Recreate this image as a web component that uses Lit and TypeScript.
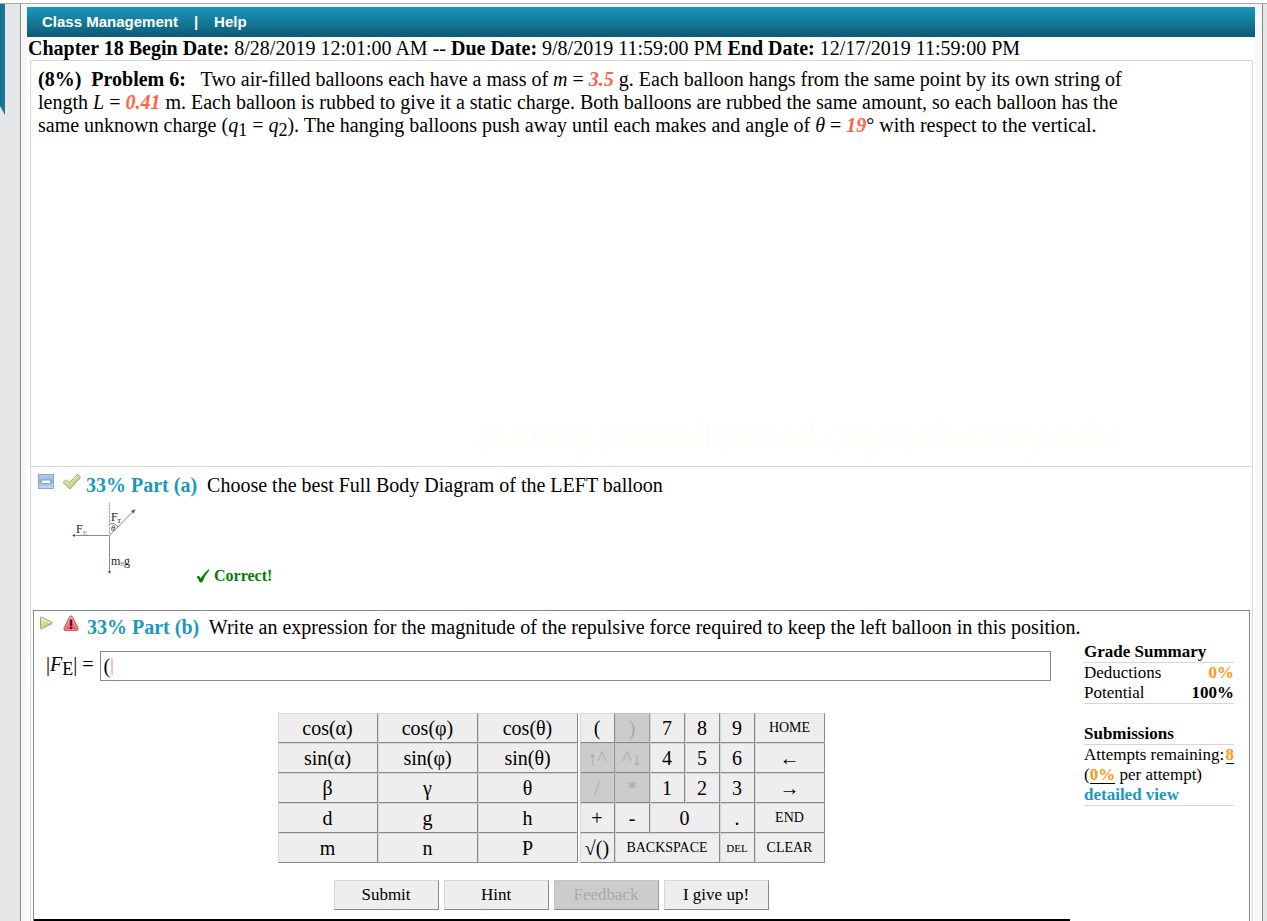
import { LitElement, html, css, svg, nothing } from "lit";
import { customElement, property, state } from "lit/decorators.js";

interface Key {
  label: string;
  off?: boolean;
  span?: number;
  size?: "small" | "tiny";
}

const SYMBOLS: string[] = [
  "cos(α)", "cos(φ)", "cos(θ)",
  "sin(α)", "sin(φ)", "sin(θ)",
  "β", "γ", "θ",
  "d", "g", "h",
  "m", "n", "P",
];

const KEYS: Key[] = [
  { label: "(" }, { label: ")", off: true }, { label: "7" }, { label: "8" }, { label: "9" }, { label: "HOME", size: "small" },
  { label: "↑^", off: true }, { label: "^↓", off: true }, { label: "4" }, { label: "5" }, { label: "6" }, { label: "←" },
  { label: "/", off: true }, { label: "*", off: true }, { label: "1" }, { label: "2" }, { label: "3" }, { label: "→" },
  { label: "+" }, { label: "-" }, { label: "0", span: 2 }, { label: "." }, { label: "END", size: "small" },
  { label: "√()" }, { label: "BACKSPACE", span: 3, size: "small" }, { label: "DEL", size: "tiny" }, { label: "CLEAR", size: "small" },
];

const buttonStyles = css`
  button {
    box-sizing: border-box;
    height: 30px;
    margin: 0;
    padding: 0;
    font-family: "Liberation Serif", "Times New Roman", serif;
    font-size: 20px;
    line-height: 28px;
    color: #000;
    background: #eee;
    border: 1px solid;
    border-color: #d6d6d6 #888 #888 #d6d6d6;
    border-radius: 0;
    white-space: nowrap;
  }
  button:disabled {
    color: #aaa;
    background: #ccc;
    border-color: #c4c4c4 #999 #888 #c4c4c4;
  }
`;

@customElement("key-pad")
export class KeyPad extends LitElement {
  static styles = [
    buttonStyles,
    css`
      :host {
        display: flex;
        justify-content: center;
        gap: 2px;
      }
      .symbols {
        display: grid;
        grid-template-columns: repeat(3, 100px);
      }
      .keys {
        display: grid;
        grid-template-columns: repeat(5, 35px) 70px;
      }
      .two {
        grid-column: span 2;
      }
      .three {
        grid-column: span 3;
      }
      .small {
        font-size: 14px;
      }
      .tiny {
        font-size: 11px;
      }
    `,
  ];

  private press(label: string) {
    this.dispatchEvent(new CustomEvent("key-press", { detail: label }));
  }

  render() {
    return html`
      <div class="symbols">
        ${SYMBOLS.map((s) => html`<button type="button" @click=${() => this.press(s)}>${s}</button>`)}
      </div>
      <div class="keys">
        ${KEYS.map((k) => {
          const names = [k.size ?? "", k.span === 2 ? "two" : k.span === 3 ? "three" : ""].join(" ").trim();
          return html`<button
            type="button"
            class=${names || nothing}
            ?disabled=${!!k.off}
            @click=${() => this.press(k.label)}
          >${k.label}</button>`;
        })}
      </div>
    `;
  }
}

@customElement("status-icon")
export class StatusIcon extends LitElement {
  @property() name = "";

  static styles = css`
    :host {
      display: block;
      width: 20px;
      height: 18px;
    }
    svg {
      display: block;
    }
  `;

  private art() {
    switch (this.name) {
      case "collapse":
        return svg`
          <defs><linearGradient id="b" x1="0" y1="0" x2="0" y2="1">
            <stop offset="0" stop-color="#b9d0ea"/><stop offset="0.5" stop-color="#8fb2dc"/><stop offset="1" stop-color="#c3dcf2"/>
          </linearGradient></defs>
          <rect x="0.5" y="1.5" width="15" height="14" fill="url(#b)" stroke="#8ba9cf"/>
          <rect x="3.5" y="7" width="9" height="3.500" rx="1" fill="#fff" stroke="#7b9dcc"/>`;
      case "check":
        return svg`
          <defs><linearGradient id="g" x1="0" y1="0" x2="1" y2="1">
            <stop offset="0" stop-color="#d3e6a0"/><stop offset="1" stop-color="#b4d573"/>
          </linearGradient></defs>
          <path d="M1 9.5 L4.2 6.8 L7.4 9.6 L15.4 1.4 L18.6 4.2 L8 16 Z" fill="url(#g)" stroke="#93ac6c" stroke-linejoin="round"/>
          <path d="M2.6 9.6 L4.3 8.2 L7.5 11.1 L15.4 3" fill="none" stroke="#e6f1c6" stroke-width="1"/>`;
      case "play":
        return svg`
          <defs><linearGradient id="p" x1="0" y1="0" x2="1" y2="1">
            <stop offset="0" stop-color="#e3efbd"/><stop offset="1" stop-color="#a5c95c"/>
          </linearGradient></defs>
          <path d="M1.5 2.6 Q1.5 1.6 2.5 2 L12.6 7.2 Q13.6 8 12.6 8.7 L2.5 13.8 Q1.5 14.2 1.5 13.2 Z" fill="url(#p)" stroke="#93ac6c"/>
          <path d="M2.7 3.6 L11.2 8" fill="none" stroke="#f3f9de"/>`;
      default:
        return svg`
          <defs><linearGradient id="r" x1="0" y1="0" x2="0" y2="1">
            <stop offset="0" stop-color="#f0a0a0"/><stop offset="1" stop-color="#dd5158"/>
          </linearGradient></defs>
          <path d="M6.6 1.6 Q8 0.2 9.3 1.6 L15 13 Q15.6 15.6 13.4 15.6 L2.6 15.6 Q0.4 15.6 1 13 Z" fill="url(#r)" stroke="#c65a60"/>
          <path d="M7.9 2.6 L2.4 13.4 Q2.2 14.5 3.2 14.5 L12.8 14.5 Q13.8 14.5 13.5 13.4 Z" fill="none" stroke="#f6c3c3" stroke-opacity="0.7" stroke-width="0.8"/>
          <path d="M8 5.500 L8 10" stroke="#6b1018" stroke-width="2.4" stroke-linecap="round"/>
          <circle cx="8" cy="13" r="1.3" fill="#6b1018"/>`;
    }
  }

  render() {
    return html`<svg width="20" height="18" viewBox="0 0 20 18" aria-hidden="true">${this.art()}</svg>`;
  }
}

@customElement("force-diagram")
export class ForceDiagram extends LitElement {
  static styles = css`
    :host {
      display: block;
    }
    svg {
      display: block;
      font-family: "Liberation Serif", "Times New Roman", serif;
      fill: #222;
    }
    .line {
      stroke: #8c8c8c;
      stroke-width: 1;
      fill: none;
    }
    .dash {
      stroke: #aaa;
      stroke-dasharray: 3 1;
    }
    .name {
      font-size: 12px;
    }
    .sub {
      font-size: 7px;
    }
    .light {
      fill: #888;
    }
    .angle {
      font-size: 8px;
      font-style: italic;
    }
    .head {
      fill: #555;
    }
  `;

  render() {
    return html`
      <svg width="68" height="74" viewBox="0 0 68 74" role="img" aria-label="Free body diagram of the left balloon">
        <path class="line dash" d="M37.5 1 V33" />
        <path class="line" d="M1 33.5 H37.5 V70" />
        <path class="line" d="M37.5 33.5 L61 9.5" />
        <path class="line" d="M37.5 22 Q43 20 46 25" />
        <path class="head" d="M0 33.5 l3 -1.500 v3 z M37.5 72 l-1.500 -3 h3 z M63.500 7 l-4.500 2 l2.500 2.500 z" />
        <text class="name" x="4" y="31">F</text>
        <text class="sub light" x="11" y="33">E</text>
        <text class="name" x="39" y="19">F</text>
        <text class="sub" x="45" y="21">T</text>
        <text class="angle" x="39" y="29">θ</text>
        <text class="name" x="39" y="63">m</text>
        <text class="sub light" x="48" y="64">B</text>
        <text class="name" x="52" y="63">g</text>
      </svg>
    `;
  }
}

@customElement("app-root")
export class AppRoot extends LitElement {
  @state() private answer = "(";

  static styles = [
    buttonStyles,
    css`
      :host {
        display: flex;
        flex-direction: column;
        box-sizing: border-box;
        height: 100vh;
        overflow: hidden;
        padding-top: 3px;
        background: #fff;
        color: #000;
        font-family: "Liberation Serif", "Times New Roman", serif;
        font-size: 20px;
        line-height: 23px;
      }
      a {
        color: inherit;
        text-decoration: none;
      }
      .shell {
        flex: 1;
        min-height: 0;
        display: flex;
        border-top: 1px solid #aaa;
        background: #e5e7e9;
      }
      .rail {
        flex: 0 0 20px;
      }
      .ribbon {
        width: 5px;
        height: 111px;
        background: linear-gradient(90deg, #12708f, #1a7c9c);
        clip-path: polygon(0 0, 100% 0, 100% 100%, 0 92%);
      }
      .edge {
        flex: 0 0 4px;
      }
      .panel {
        flex: 1;
        min-width: 0;
        display: flex;
        flex-direction: column;
        padding: 3px 7px 0 6px;
        background: #f7f7f7;
        border: solid #888;
        border-width: 0 1px;
      }
      .menu {
        display: flex;
        align-items: center;
        gap: 16px;
        height: 30px;
        padding-left: 15px;
        background: linear-gradient(#1a98bd, #0d5a75);
        color: #fff;
        font: bold 15px/30px "Liberation Sans", Arial, sans-serif;
      }
      .page {
        flex: 1;
        min-height: 0;
        display: flex;
        flex-direction: column;
        background: #fff;
        padding: 0 2px 0 3px;
      }
      .dates {
        margin: 0 0 0 -2px;
      }
      .sheet {
        flex: 1;
        display: flex;
        flex-direction: column;
        border: solid #d6d6d6;
        border-width: 1px 1px 0;
      }
      .problem {
        display: flex;
        flex-direction: column;
        justify-content: space-between;
        box-sizing: border-box;
        min-height: 406px;
        padding: 7px 120px 8px 7px;
        border-bottom: 1px solid #d6d6d6;
      }
      .problem p {
        margin: 0;
      }
      .problem .stamp {
        align-self: flex-end;
        margin-right: 14px;
        color: #fffef6;
        font: 36px/44px "Open Sans", sans-serif;
      }
      .value {
        color: #ff6347;
        font-weight: bold;
        font-style: italic;
      }
      sub {
        font-size: 18px;
        line-height: 0;
        vertical-align: -4px;
      }
      .title {
        display: flex;
        align-items: flex-start;
        gap: 4px;
        margin: 0;
        font-size: 20px;
        font-weight: normal;
      }
      .title span {
        padding-top: 1px;
      }
      .title strong {
        color: #1a98bd;
        margin-right: 5px;
      }
      .part-a {
        box-sizing: border-box;
        padding: 6px 7px 0;
        height: 143px;
      }
      .result {
        display: flex;
        align-items: flex-end;
        gap: 56px;
        padding: 5px 0 0 34px;
      }
      .correct {
        display: flex;
        align-items: center;
        gap: 4px;
        color: #008000;
        font-size: 16px;
        font-weight: bold;
        line-height: 20px;
        margin-bottom: -10px;
      }
      .part-b {
        flex: 1;
        margin: 0 2px;
        border: solid #888;
        border-width: 1px 1px 0;
      }
      .part-b .title {
        padding: 4px 0 0 5px;
      }
      .columns {
        display: grid;
        grid-template-columns: 1fr 150px;
        column-gap: 14px;
        padding-right: 15px;
      }
      .entry {
        display: flex;
        align-items: flex-start;
        gap: 6px;
        padding: 12px 19px 32px 12px;
      }
      .entry label {
        line-height: 27px;
      }
      .field {
        position: relative;
        flex: 1;
      }
      .field input {
        display: block;
        box-sizing: border-box;
        width: 100%;
        height: 30px;
        padding: 0 3px;
        border: 1px solid #888;
        border-radius: 0;
        background: #fff;
        font: 20px/28px "Liberation Serif", "Times New Roman", serif;
        outline: none;
      }
      .caret {
        position: absolute;
        left: 11px;
        top: 7px;
        width: 2px;
        height: 17px;
        background: #ffb8dc;
      }
      .controls {
        padding-right: 2px;
      }
      .actions {
        display: flex;
        justify-content: center;
        gap: 5px;
        padding: 17px 0 9px;
      }
      .actions button {
        width: 105px;
        font-size: 17px;
      }
      .rule {
        margin: 0;
        border: 0;
        height: 3px;
        background: #000;
      }
      .summary {
        padding-top: 3px;
        font-size: 17px;
        line-height: 20px;
      }
      .summary h3 {
        margin: 0;
        font-size: 17px;
        line-height: 20px;
        border-bottom: 1px solid #d6d6d6;
      }
      .block {
        border-bottom: 1px solid #d6d6d6;
        margin-bottom: 20px;
      }
      .row {
        display: flex;
        justify-content: space-between;
        white-space: nowrap;
      }
      .orange {
        color: #ff9912;
        font-weight: bold;
      }
      .marked {
        display: inline-block;
        line-height: 17px;
        border-bottom: 1px solid #000;
      }
      .detail {
        display: block;
        color: #1a98bd;
        font-weight: bold;
      }
    `,
  ];

  render() {
    return html`
      <div class="shell">
        <div class="rail"><div class="ribbon"></div></div>
        <div class="panel">
          <nav class="menu">
            <a href="#class">Class Management</a><span>|</span><a href="#help">Help</a>
          </nav>
          <main class="page">
            <p class="dates">
              <b>Chapter 18 Begin Date:</b> 8/28/2019 12:01:00 AM -- <b>Due Date:</b> 9/8/2019 11:59:00 PM
              <b>End Date:</b> 12/17/2019 11:59:00 PM
            </p>
            <div class="sheet">
              <section class="problem">
                <p>
                  <b>(8%) &nbsp;Problem 6:</b> &nbsp; Two air-filled balloons each have a mass of <i>m</i> =
                  <span class="value">3.5</span> g. Each balloon hangs from the same point by its own string of length
                  <i>L</i> = <span class="value">0.41</span> m. Each balloon is rubbed to give it a static charge. Both
                  balloons are rubbed the same amount, so each balloon has the same unknown charge
                  (<i>q</i><sub>1</sub> = <i>q</i><sub>2</sub>). The hanging balloons push away until each makes and
                  angle of <i>θ</i> = <span class="value">19</span>° with respect to the vertical.
                </p>
                <p class="stamp">audrey.powell@mail.citytech.cuny.edu</p>
              </section>

              <section class="part-a">
                <h2 class="title">
                  <status-icon name="collapse"></status-icon><status-icon name="check"></status-icon>
                  <span><strong>33% Part (a)</strong> Choose the best Full Body Diagram of the LEFT balloon</span>
                </h2>
                <div class="result">
                  <force-diagram></force-diagram>
                  <span class="correct">
                    <svg width="14" height="14" viewBox="0 0 14 14" aria-hidden="true">
                      <path d="M0.500 8 Q2 6 3.600 7.600 L4.800 9.600 Q8 4 12.400 0.500 L13.600 1 Q9 6 6.400 13 Q4.800 14 3.600 13 Q2.600 9.800 0.500 8 Z" fill="#008000" />
                    </svg>Correct!</span>
                </div>
              </section>

              <section class="part-b">
                <h2 class="title">
                  <status-icon name="play"></status-icon><status-icon name="warning"></status-icon>
                  <span><strong>33% Part (b)</strong> Write an expression for the magnitude of the repulsive force
                    required to keep the left balloon in this position.</span>
                </h2>
                <div class="columns">
                  <div>
                    <div class="entry">
                      <label for="answer">|<i>F</i><sub>E</sub>| =</label>
                      <div class="field">
                        <input
                          id="answer"
                          type="text"
                          autocomplete="off"
                          .value=${this.answer}
                          @input=${(e: Event) => (this.answer = (e.target as HTMLInputElement).value)}
                        />
                        <span class="caret"></span>
                      </div>
                    </div>
                    <div class="controls">
                      <key-pad @key-press=${(e: CustomEvent<string>) => (this.answer += e.detail)}></key-pad>
                      <div class="actions">
                        <button type="button">Submit</button>
                        <button type="button">Hint</button>
                        <button type="button" disabled>Feedback</button>
                        <button type="button">I give up!</button>
                      </div>
                    </div>
                    <hr class="rule" />
                  </div>
                  <aside class="summary">
                    <div class="block">
                      <h3>Grade Summary</h3>
                      <div class="row"><span>Deductions</span><span class="orange">0%</span></div>
                      <div class="row"><span>Potential</span><b>100%</b></div>
                    </div>
                    <div class="block">
                      <h3>Submissions</h3>
                      <div class="row"><span>Attempts remaining:</span><span><span class="orange marked">8</span></span></div>
                      <div>(<span class="orange marked">0%</span> per attempt)</div>
                      <a class="detail" href="#detail">detailed view</a>
                    </div>
                  </aside>
                </div>
              </section>
            </div>
          </main>
        </div>
        <div class="edge"></div>
      </div>
    `;
  }
}
